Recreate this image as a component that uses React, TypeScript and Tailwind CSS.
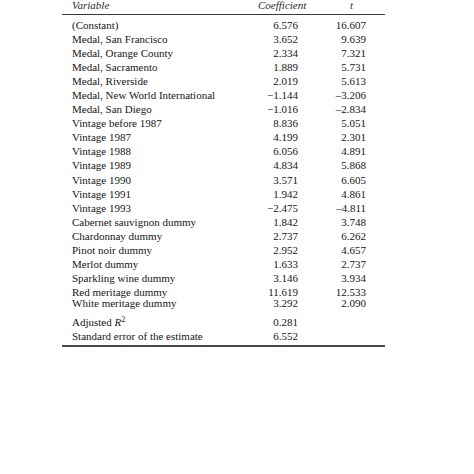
import React from "react";

const rows: [string, string, string][] = [
  ["(Constant)", "6.576", "16.607"],
  ["Medal, San Francisco", "3.652", "9.639"],
  ["Medal, Orange County", "2.334", "7.321"],
  ["Medal, Sacramento", "1.889", "5.731"],
  ["Medal, Riverside", "2.019", "5.613"],
  ["Medal, New World International", "\u22121.144", "\u20133.206"],
  ["Medal, San Diego", "\u22121.016", "\u20132.834"],
  ["Vintage before 1987", "8.836", "5.051"],
  ["Vintage 1987", "4.199", "2.301"],
  ["Vintage 1988", "6.056", "4.891"],
  ["Vintage 1989", "4.834", "5.868"],
  ["Vintage 1990", "3.571", "6.605"],
  ["Vintage 1991", "1.942", "4.861"],
  ["Vintage 1993", "\u22122.475", "\u20134.811"],
  ["Cabernet sauvignon dummy", "1.842", "3.748"],
  ["Chardonnay dummy", "2.737", "6.262"],
  ["Pinot noir dummy", "2.952", "4.657"],
  ["Merlot dummy", "1.633", "2.737"],
  ["Sparkling wine dummy", "3.146", "3.934"],
  ["Red meritage dummy", "11.619", "12.533"],
];

function Row({ a, b, c, h }: { a: React.ReactNode; b: string; c: string; h: string }) {
  return (
    <div className={`flex items-center pl-[10px] pr-[19px] ${h}`}>
      <div className="flex-1 whitespace-nowrap">{a}</div>
      <div className="w-[60px] text-right">{b}</div>
      <div className="w-[68px] text-right">{c}</div>
    </div>
  );
}

export default function App() {
  return (
    <div className="w-[474px] h-[474px] bg-white overflow-hidden">
      <div
        className="ml-[62px] w-[323px] text-[11px] leading-[14px] text-[#161616]"
        style={{ fontFamily: '"Liberation Serif", "Times New Roman", serif' }}
      >
        <div className="flex items-center h-[12px] -mt-[1px] pl-[10px] italic text-[#2a2a2a]">
          <div className="flex-1">Variable</div>
          <div className="w-[92px] shrink-0">Coefficient</div>
          <div className="w-[35px] shrink-0">t</div>
        </div>
        <div className="mt-[3px] h-[1px] bg-[#3a3a3a]" />
        <div className="pt-[3px]">
          {rows.map((r, i) => (
            <Row key={i} a={r[0]} b={r[1]} c={r[2]} h="h-[14.05px]" />
          ))}
          <div className="-mt-[3px]">
            <Row a="White meritage dummy" b="3.292" c="2.090" h="h-[14px]" />
          </div>
          <div className="mt-[5px]">
            <Row
              a={
                <span>
                  Adjusted <span className="italic">R</span>
                  <span className="text-[8px] leading-none relative -top-[4px]">2</span>
                </span>
              }
              b="0.281"
              c=""
              h="h-[14.1px]"
            />
            <Row a="Standard error of the estimate" b="6.552" c="" h="h-[14.1px]" />
          </div>
        </div>
        <div className="mt-[2px] h-[2px] bg-[#4a4a4a]" />
      </div>
    </div>
  );
}
